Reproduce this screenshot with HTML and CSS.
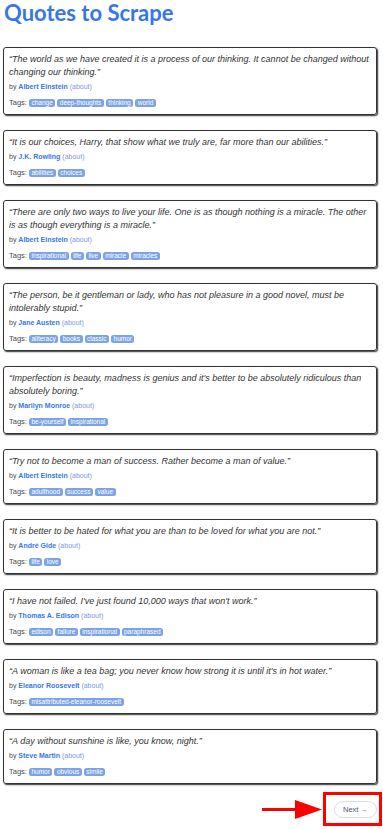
FILE: index.html
```html
<!DOCTYPE html>
<html lang="en">
<head>
<meta charset="utf-8">
<title>Quotes to Scrape</title>
<link rel="stylesheet" href="styles.css">
</head>
<body>
<div class="page">
  <header class="header">
    <h1 class="title">Quotes to Scrape</h1>
  </header>

  <div class="quote">
    <span class="text">“The world as we have created it is a process of our thinking. It cannot be changed without changing our thinking.”</span>
    <span class="by">by <span class="author">Albert Einstein</span> <span class="about">(about)</span></span>
    <div class="tags">Tags: <span class="tag">change</span><span class="tag">deep-thoughts</span><span class="tag">thinking</span><span class="tag">world</span></div>
  </div>

  <div class="quote">
    <span class="text">“It is our choices, Harry, that show what we truly are, far more than our abilities.”</span>
    <span class="by">by <span class="author">J.K. Rowling</span> <span class="about">(about)</span></span>
    <div class="tags">Tags: <span class="tag">abilities</span><span class="tag">choices</span></div>
  </div>

  <div class="quote">
    <span class="text">“There are only two ways to live your life. One is as though nothing is a miracle. The other is as though everything is a miracle.”</span>
    <span class="by">by <span class="author">Albert Einstein</span> <span class="about">(about)</span></span>
    <div class="tags">Tags: <span class="tag">inspirational</span><span class="tag">life</span><span class="tag">live</span><span class="tag">miracle</span><span class="tag">miracles</span></div>
  </div>

  <div class="quote">
    <span class="text">“The person, be it gentleman or lady, who has not pleasure in a good novel, must be intolerably stupid.”</span>
    <span class="by">by <span class="author">Jane Austen</span> <span class="about">(about)</span></span>
    <div class="tags">Tags: <span class="tag">aliteracy</span><span class="tag">books</span><span class="tag">classic</span><span class="tag">humor</span></div>
  </div>

  <div class="quote">
    <span class="text">“Imperfection is beauty, madness is genius and it's better to be absolutely ridiculous than absolutely boring.”</span>
    <span class="by">by <span class="author">Marilyn Monroe</span> <span class="about">(about)</span></span>
    <div class="tags">Tags: <span class="tag">be-yourself</span><span class="tag">inspirational</span></div>
  </div>

  <div class="quote">
    <span class="text">“Try not to become a man of success. Rather become a man of value.”</span>
    <span class="by">by <span class="author">Albert Einstein</span> <span class="about">(about)</span></span>
    <div class="tags">Tags: <span class="tag">adulthood</span><span class="tag">success</span><span class="tag">value</span></div>
  </div>

  <div class="quote">
    <span class="text">“It is better to be hated for what you are than to be loved for what you are not.”</span>
    <span class="by">by <span class="author">André Gide</span> <span class="about">(about)</span></span>
    <div class="tags">Tags: <span class="tag">life</span><span class="tag">love</span></div>
  </div>

  <div class="quote">
    <span class="text">“I have not failed. I've just found 10,000 ways that won't work.”</span>
    <span class="by">by <span class="author">Thomas A. Edison</span> <span class="about">(about)</span></span>
    <div class="tags">Tags: <span class="tag">edison</span><span class="tag">failure</span><span class="tag">inspirational</span><span class="tag">paraphrased</span></div>
  </div>

  <div class="quote">
    <span class="text">“A woman is like a tea bag; you never know how strong it is until it's in hot water.”</span>
    <span class="by">by <span class="author">Eleanor Roosevelt</span> <span class="about">(about)</span></span>
    <div class="tags">Tags: <span class="tag">misattributed-eleanor-roosevelt</span></div>
  </div>

  <div class="quote">
    <span class="text">“A day without sunshine is like, you know, night.”</span>
    <span class="by">by <span class="author">Steve Martin</span> <span class="about">(about)</span></span>
    <div class="tags">Tags: <span class="tag">humor</span><span class="tag">obvious</span><span class="tag">simile</span></div>
  </div>

  <nav class="pager">
    <span class="next">Next <span class="arrow">→</span></span>
  </nav>
</div>

<div class="annot-box"></div>
<div class="annot-arrow">
  <svg width="62" height="22" viewBox="0 0 62 22">
    <rect x="0" y="9" width="36" height="3" fill="#ff0000"/>
    <polygon points="33,1 60,10.5 33,20" fill="#ff0000"/>
  </svg>
</div>
</body>
</html>
```

FILE: styles.css
```css
html, body {
  margin: 0;
  padding: 0;
  background: #ffffff;
}

body {
  font-family: "Liberation Sans", Arial, sans-serif;
  color: #333333;
  position: relative;
  min-height: 829px;
}

.page {
  padding: 0 6px 0 3px;
}

.header {
  height: 47px;
}

.title {
  margin: 0;
  padding: 0 0 0 1px;
  font-family: Lato, "Liberation Sans", sans-serif;
  font-weight: 700;
  font-size: 22px;
  line-height: 25px;
  color: #3677e8;
}

.quote {
  border: 1px solid #333333;
  border-radius: 3px;
  box-shadow: 1px 1px 1.5px #333333;
  padding: 5px;
  margin-bottom: 15px;
}

.text {
  display: block;
  font-style: italic;
  font-size: 9px;
  line-height: 13px;
  margin-bottom: 2px;
  color: #333333;
}

.by {
  display: block;
  font-size: 7px;
  line-height: 12px;
  margin-bottom: 4px;
  color: #4a4a4a;
}

.author {
  font-weight: bold;
  color: #3677e8;
}

.about {
  color: #7b98e4;
}

.tags {
  display: flex;
  align-items: center;
  gap: 2px;
  font-size: 7.5px;
  line-height: 12px;
  color: #4a4a4a;
}

.tag {
  background: #7ca3e6;
  color: #ffffff;
  font-size: 6.5px;
  line-height: 8.5px;
  padding: 0 2.5px;
  border-radius: 2.5px;
}

.pager {
  display: flex;
  justify-content: flex-end;
  padding-top: 2px;
}

.next {
  font-size: 7.5px;
  line-height: 15px;
  padding: 0 8px;
  border: 1px solid #dddddd;
  border-radius: 9px;
  color: #4d5a73;
}

.arrow {
  color: #999999;
}

.annot-box {
  position: absolute;
  left: 323px;
  top: 792px;
  width: 53px;
  height: 28px;
  border: 3px solid #ff0000;
}

.annot-arrow {
  position: absolute;
  left: 262px;
  top: 799px;
  width: 62px;
  height: 22px;
}

.annot-arrow svg {
  display: block;
}
```
